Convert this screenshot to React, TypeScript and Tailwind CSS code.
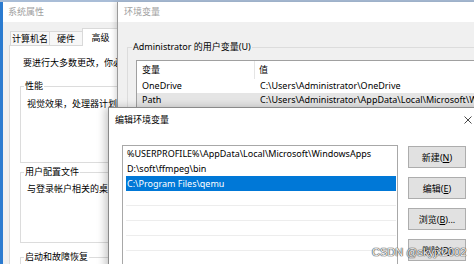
const winFont = "font-['Segoe_UI','Noto_Sans','Noto_Sans_CJK_SC',sans-serif]";

const editEntries = [
  "%USERPROFILE%\\AppData\\Local\\Microsoft\\WindowsApps",
  "D:\\soft\\ffmpeg\\bin",
  "C:\\Program Files\\qemu",
];

const userVars = [
  { name: "OneDrive", value: "C:\\Users\\Administrator\\OneDrive" },
  {
    name: "Path",
    value: "C:\\Users\\Administrator\\AppData\\Local\\Microsoft\\WindowsApps;",
  },
];

function SystemProperties() {
  return (
    <div className="absolute left-[3px] top-[2px] flex h-[280px] w-[140px] flex-col overflow-hidden bg-[#f0f0f0]">
      <div className="flex h-[20px] shrink-0 items-center bg-white pl-[5px] text-[#a0a0a0]">
        系统属性
      </div>

      <div className="flex h-[23px] shrink-0 items-end pl-[7px]">
        <div className="flex h-[14px] w-[40px] items-center justify-center border border-b-0 border-[#d9d9d9] bg-[#f7f7f7]">
          计算机名
        </div>
        <div className="-ml-px flex h-[14px] w-[34px] items-center justify-center border border-b-0 border-[#d9d9d9] bg-[#f7f7f7]">
          硬件
        </div>
        <div className="relative -mb-px -ml-px flex h-[18px] w-[37px] items-center justify-center border border-b-0 border-[#d9d9d9] bg-white">
          高级
        </div>
      </div>

      <div className="ml-[6px] flex flex-1 flex-col border border-[#d9d9d9] bg-white">
        <p className="mt-[11px] whitespace-nowrap pl-[13px] leading-[12px]">
          要进行大多数更改，你必须作为管理员登录。
        </p>

        <fieldset className="ml-[10px] mt-[11px] h-[83px] w-[160px] border border-[#dcdcdc]">
          <legend className="ml-[3px] px-[1px] leading-[12px]">性能</legend>
          <p className="mt-[6px] whitespace-nowrap pl-[6px] leading-[12px]">
            视觉效果，处理器计划，内存使用，以及虚拟内存
          </p>
        </fieldset>

        <fieldset className="ml-[10px] mt-[3px] h-[77px] w-[160px] border border-[#dcdcdc]">
          <legend className="ml-[3px] px-[1px] leading-[12px]">用户配置文件</legend>
          <p className="mt-[5px] whitespace-nowrap pl-[6px] leading-[12px]">
            与登录帐户相关的桌面设置
          </p>
        </fieldset>

        <fieldset className="ml-[10px] mt-[8px] h-[60px] w-[160px] border border-[#dcdcdc]">
          <legend className="ml-[3px] px-[1px] leading-[12px]">启动和故障恢复</legend>
        </fieldset>
      </div>
    </div>
  );
}

function EnvironmentVariables() {
  return (
    <div className="absolute left-[117px] top-[2px] flex h-[280px] w-[380px] flex-col border-l border-[#9a9a9a] bg-[#f0f0f0] shadow-[-2px_0_5px_rgba(0,0,0,0.15)]">
      <div className="flex h-[20px] shrink-0 items-center bg-white pl-[6px] text-[#a0a0a0]">
        环境变量
      </div>

      <fieldset className="ml-[9px] mt-[19px] h-[200px] w-[400px] border border-[#dcdcdc]">
        <legend className="ml-[4px] px-[1px] leading-[12px]">
          Administrator 的用户变量(U)
        </legend>

        <div className="ml-[8px] mt-[7px] border border-[#a0a0a0] bg-white">
          <div className="flex h-[18px] items-center">
            <div className="flex h-full w-[118px] items-center border-r border-[#e5e5e5] pl-[5px]">
              变量
            </div>
            <div className="pl-[4px]">值</div>
          </div>
          {userVars.map((v) => (
            <div
              key={v.name}
              className={
                v.name === "Path"
                  ? "flex h-[14px] items-center whitespace-nowrap bg-[#e5e5e5]"
                  : "flex h-[14px] items-center whitespace-nowrap"
              }
            >
              <div className="w-[119px] shrink-0 pl-[5px]">{v.name}</div>
              <div className="pl-[4px]">{v.value}</div>
            </div>
          ))}
          <div className="h-[60px]" />
        </div>
      </fieldset>
    </div>
  );
}

function EditButton({ label, mnemonic, suffix }: { label: string; mnemonic: string; suffix?: string }) {
  return (
    <button className="flex h-[22px] w-[58px] items-center justify-center border border-[#adadad] bg-[#e1e1e1] leading-none">
      {label}(<span className="underline">{mnemonic}</span>){suffix}
    </button>
  );
}

function EditEnvironmentVariable() {
  return (
    <div className="absolute left-[108px] top-[107px] flex h-[170px] w-[378px] flex-col border border-[#8a8a8a] bg-white shadow-[-3px_0_8px_rgba(0,0,0,0.22)]">
      <div className="flex h-[24px] shrink-0 items-center">
        <span className="flex-1 pl-[6px]">编辑环境变量</span>
        <span className="flex h-full w-[34px] items-center justify-center">
          <svg width="8" height="8" viewBox="0 0 8 8">
            <path d="M0.5 0.5 L7.5 7.5 M7.5 0.5 L0.5 7.5" stroke="#333" strokeWidth="0.9" fill="none" />
          </svg>
        </span>
      </div>

      <div className="flex gap-[10px] pl-[13px] pt-[13px]">
        <div className="h-[140px] w-[276px] border border-[#a8a8a8] bg-white pl-[3px] pr-px">
          {editEntries.map((e, i) => (
            <div
              key={e}
              className={
                i === 2
                  ? "flex h-[15px] items-center whitespace-nowrap bg-[#0078d7] pl-px text-white"
                  : "flex h-[15px] items-center whitespace-nowrap pl-px"
              }
            >
              {e}
            </div>
          ))}
          {[0, 1, 2, 3, 4].map((n) => (
            <div key={n} className="h-[15px] border-b border-[#ededed]" />
          ))}
        </div>

        <div className="flex flex-col gap-[9px] pt-px">
          <EditButton label="新建" mnemonic="N" />
          <EditButton label="编辑" mnemonic="E" />
          <EditButton label="浏览" mnemonic="B" suffix="..." />
          <EditButton label="删除" mnemonic="D" />
        </div>
      </div>
    </div>
  );
}

export default function App() {
  return (
    <div className={`relative h-[264px] w-[474px] overflow-hidden bg-[#2b7bd0] text-[9px] text-black ${winFont}`}>
      <div className="absolute inset-x-0 top-0 h-[2px] bg-[#a9bdd7]" />
      <SystemProperties />
      <EnvironmentVariables />
      <EditEnvironmentVariable />
      <div className="absolute left-[372px] top-[246px] font-['Liberation_Sans',Arial,sans-serif] text-[11px] leading-[12px] text-[#f4f4f4] [text-shadow:0_0_1px_#444,0_0_1px_#444,0_0_1px_#444]">
        CSDN @skyjx2002
      </div>
    </div>
  );
}
